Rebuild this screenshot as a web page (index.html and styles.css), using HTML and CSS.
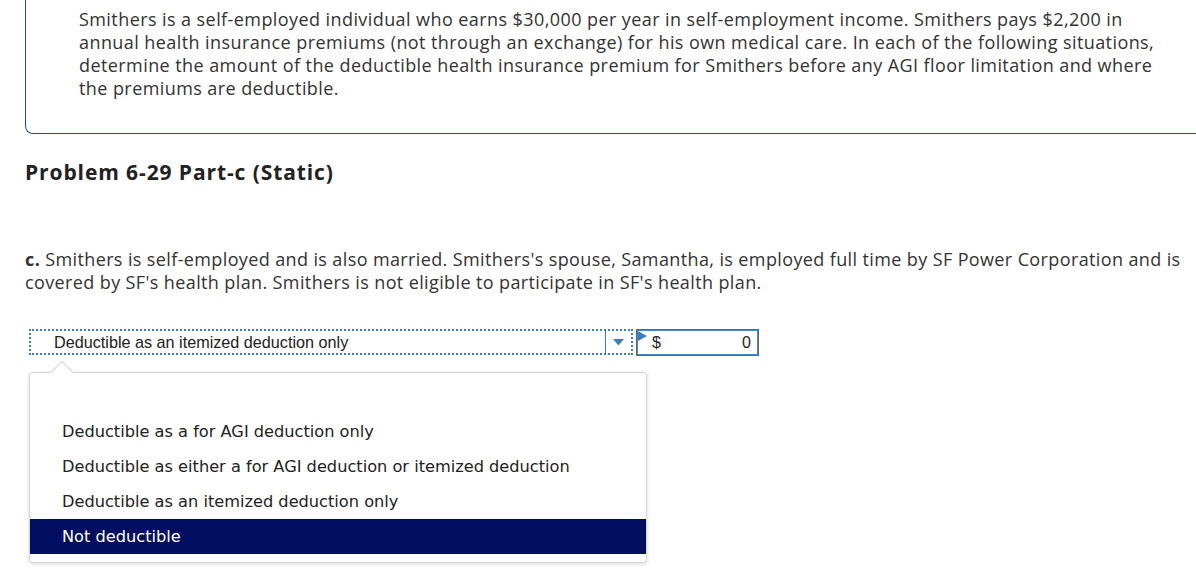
FILE: index.html
```html
<!DOCTYPE html>
<html>
<head>
<meta charset="utf-8">
<link rel="stylesheet" href="styles.css">
</head>
<body>
<div class="page">
  <div class="intro">
    <p class="intro-text">Smithers is a self-employed individual who earns $30,000 per year in self-employment income. Smithers pays $2,200 in<br>annual health insurance premiums (not through an exchange) for his own medical care. In each of the following situations,<br>determine the amount of the deductible health insurance premium for Smithers before any AGI floor limitation and where<br>the premiums are deductible.</p>
  </div>
  <h2 class="title">Problem 6-29 Part-c (Static)</h2>
  <p class="question"><b>c.</b> Smithers is self-employed and is also married. Smithers's spouse, Samantha, is employed full time by SF Power Corporation and is<br>covered by SF's health plan. Smithers is not eligible to participate in SF's health plan.</p>
  <div class="answer-row">
    <div class="select">
      <span class="select-value">Deductible as an itemized deduction only</span>
      <span class="select-arrow"><svg width="11" height="7" viewBox="0 0 11 7"><path d="M0 0 L11 0 L5.5 6.5 Z" fill="#3a7dc4"/></svg></span>
    </div>
    <div class="amount">
      <span class="flag"></span>
      <span class="dollar">$</span>
      <span class="value">0</span>
    </div>
  </div>
  <div class="dropdown">
    <span class="caret"></span>
    <ul class="options">
      <li class="option">Deductible as a for AGI deduction only</li>
      <li class="option">Deductible as either a for AGI deduction or itemized deduction</li>
      <li class="option">Deductible as an itemized deduction only</li>
      <li class="option selected">Not deductible</li>
    </ul>
  </div>
</div>
</body>
</html>
```
FILE: styles.css
```css
* { box-sizing: border-box; }
html, body { margin: 0; padding: 0; background: #fff; }
body { font-family: "Open Sans", "Lato", sans-serif; color: #333; }
.page { padding-left: 25px; width: 1196px; height: 572px; overflow: hidden; }
.intro {
  border-left: 1.5px solid #1d4f8c;
  border-bottom: 1.5px solid #1d4f8c;
  border-bottom-left-radius: 8px;
  height: 134px;
  margin-right: -10px;
  padding: 8px 0 0 53px;
}
.intro-text { margin: 0; font-size: 18px; line-height: 23px; letter-spacing: 0.42px; white-space: nowrap; }
.title { margin: 26px 0 0 0; font-size: 21px; line-height: 24px; font-weight: 700; letter-spacing: 0.9px; color: #222; }
.question { margin: 64px 0 0 0; font-size: 18px; line-height: 23px; letter-spacing: 0.38px; white-space: nowrap; }
.question b { font-weight: 700; }
.answer-row { display: flex; align-items: flex-start; margin-top: 35px; margin-left: 4px; height: 27px; }
.select {
  width: 604px; height: 26px; margin-top: 0;
  border: 2px dotted #3a7dc4;
  display: flex; align-items: center;
  font-family: "Liberation Sans", Arial, sans-serif; font-size: 16.2px; color: #222;
}
.select-value { flex: 1; padding-left: 23px; }
.select-arrow { width: 26px; height: 22px; border-left: 1.5px solid #3a7dc4; display: flex; align-items: center; justify-content: center; padding-top: 1px; }
.amount {
  position: relative;
  width: 123px; height: 27px; margin-left: 3px;
  border: 1px solid #666;
  box-shadow: inset 0 0 0 1px #4a86c8;
  display: flex; align-items: center; justify-content: space-between;
  padding: 0 7px 0 15px;
  font-family: "Liberation Sans", Arial, sans-serif; font-size: 16px; color: #222;
}
.flag { position: absolute; left: 1px; top: 1px; width: 0; height: 0; border-left: 9px solid #3a7dc4; border-top: 5px solid transparent; border-bottom: 5px solid transparent; }
.dropdown {
  position: relative;
  width: 618px; margin-top: 16px; margin-left: 4px;
  border: 1px solid #d6d6d6; border-radius: 4px;
  box-shadow: 0 1px 4px rgba(0,0,0,0.15);
  background: #fff;
  padding: 41px 0 8px 0;
}
.caret {
  position: absolute; top: -9px; left: 24px;
  width: 16px; height: 16px; background: #fff;
  border-left: 1px solid #d6d6d6; border-top: 1px solid #d6d6d6;
  transform: rotate(45deg);
}
.options { list-style: none; margin: 0; padding: 0; }
.option {
  height: 35px; line-height: 35px; padding-left: 32px;
  font-family: "DejaVu Sans", Verdana, sans-serif; font-size: 16.2px; color: #222;
}
.option.selected { background: #000e61; color: #fff; }
```
